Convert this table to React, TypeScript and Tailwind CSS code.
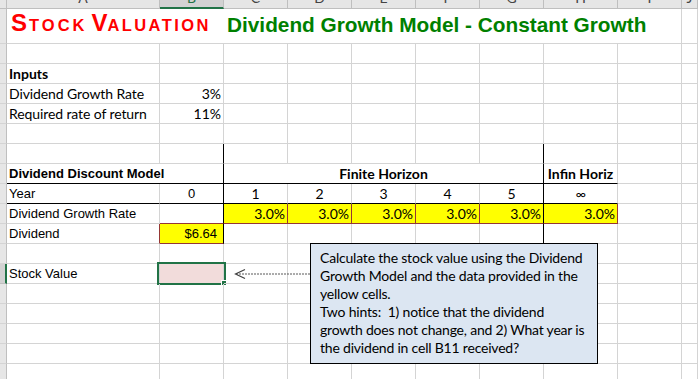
import React from "react";

const CAL = "font-['Lato',sans-serif] text-[14px]";
const ARI = "font-['Liberation_Sans',Arial,sans-serif] text-[13px]";
const G = "border-r-[#d4d4d4]";
const GB = "border-b-[#d4d4d4]";
const BLK = "border-r-black";
const BLKB = "border-b-black";
const MR = "border-r-[#953735]";
const MB = "border-b-[#953735]";

type CP = { className?: string; r?: string; b?: string; children?: React.ReactNode };

function C({ className = "", r = G, b = GB, children }: CP) {
  return (
    <div className={`relative flex items-end whitespace-nowrap border-r border-b ${r} ${b} ${className}`}>
      {children}
    </div>
  );
}

function RH({ active = false }: { active?: boolean }) {
  return active ? (
    <div className="border-b border-b-[#bfbfbf] border-r-2 border-r-[#217346] bg-[#d2d2d2]" />
  ) : (
    <div className="border-b border-r border-b-[#d4d4d4] border-r-[#bfbfbf] bg-[#e6e6e6]" />
  );
}

function Blank({ n }: { n: number }) {
  return (
    <>
      {Array.from({ length: n }).map((_, i) => (
        <C key={i} />
      ))}
    </>
  );
}

function HeadCell({ l, active = false }: { l: string; active?: boolean }) {
  return active ? (
    <div className="flex items-end justify-center overflow-hidden border-r border-r-[#bfbfbf] border-b-2 border-b-[#217346] bg-[#d2d2d2]">
      <span className={`${CAL} leading-[14px] mb-[2px] text-[#217346]`}>{l}</span>
    </div>
  ) : (
    <div className="flex items-end justify-center overflow-hidden border-r border-b border-r-[#bfbfbf] border-b-[#bfbfbf] bg-[#e6e6e6]">
      <span className={`${CAL} leading-[14px] mb-[3px] text-[#444444]`}>{l}</span>
    </div>
  );
}

export default function App() {
  const num = `${CAL} leading-[16px] pb-[1px] text-black`;
  const ar = `${ARI} leading-[15px] pb-[2px] text-black`;
  return (
    <div className="relative w-[698px] h-[379px] overflow-hidden bg-white">
      <div className="grid grid-cols-[7px_153px_64px_64px_64px_64px_64px_64px_74px_64px_1fr] grid-rows-[9px_35px_repeat(17,20px)]">
        {/* header row */}
        <div className="border-r border-b border-[#bfbfbf] bg-[#e6e6e6]" />
        <HeadCell l="A" />
        <HeadCell l="B" active />
        <HeadCell l="C" />
        <HeadCell l="D" />
        <HeadCell l="E" />
        <HeadCell l="F" />
        <HeadCell l="G" />
        <HeadCell l="H" />
        <HeadCell l="I" />
        <HeadCell l="J" />

        {/* row 1 */}
        <RH />
        <C className="col-span-9 items-end pb-[5px]">
          <div className="flex items-baseline w-[216px] pl-[4px] font-['Liberation_Sans',Arial,sans-serif] font-bold text-[#ff0000]">
            <span className="text-[24px] leading-[26px]">S</span>
            <span className="text-[16.5px] tracking-[3px] ml-[2px]">TOCK</span>
            <span className="text-[24px] leading-[26px] ml-[4px]">V</span>
            <span className="text-[16.5px] tracking-[2.4px]">ALUATION</span>
          </div>
          <div className="pl-[4px] font-['Liberation_Sans',Arial,sans-serif] font-bold text-[20.8px] leading-[24px] mb-[1px] text-[#008000]">
            Dividend Growth Model - Constant Growth
          </div>
        </C>
        <C />

        {/* row 2 */}
        <RH />
        <Blank n={10} />

        {/* row 3 */}
        <RH />
        <C className={`${num} font-bold pl-[2px]`}>Inputs</C>
        <Blank n={9} />

        {/* row 4 */}
        <RH />
        <C className={`${num} pl-[2px] tracking-[-0.1px]`}>Dividend Growth Rate</C>
        <C className={`${num} justify-end pr-[2px]`}>3%</C>
        <Blank n={8} />

        {/* row 5 */}
        <RH />
        <C className={`${num} pl-[2px] tracking-[-0.1px]`}>Required rate of return</C>
        <C className={`${num} justify-end pr-[2px]`}>11%</C>
        <Blank n={8} />

        {/* row 6 */}
        <RH />
        <Blank n={10} />

        {/* row 7 */}
        <RH />
        <C />
        <C r={BLK} />
        <C />
        <C />
        <C />
        <C />
        <C r={BLK} />
        <C />
        <C />
        <C />

        {/* row 8 */}
        <RH />
        <C className={`col-span-2 ${ar} font-bold pl-[2px]`} r={BLK} b={BLKB}>
          Dividend Discount Model
        </C>
        <C className={`col-span-5 ${num} font-bold justify-center`} r={BLK} b={BLKB}>
          Finite Horizon
        </C>
        <C className={`${num} font-bold justify-center`} b={BLKB}>
          Infin Horiz
        </C>
        <C />
        <C />

        {/* row 9 */}
        <RH />
        <C className={`${ar} pl-[2px]`} b={BLKB}>Year</C>
        <C className={`${ar} justify-center`} r={BLK} b={BLKB}>0</C>
        <C className={`${num} justify-center`} b={BLKB}>1</C>
        <C className={`${num} justify-center`} b={BLKB}>2</C>
        <C className={`${num} justify-center`} b={BLKB}>3</C>
        <C className={`${num} justify-center`} b={BLKB}>4</C>
        <C className={`${num} justify-center`} r={BLK} b={BLKB}>5</C>
        <C className={`${num} justify-center`} b={BLKB}>
          <span className="text-[13px] scale-x-110 inline-block">∞</span>
        </C>
        <C />
        <C />

        {/* row 10 */}
        <RH />
        <C className={`${ar} pl-[2px]`}>Dividend Growth Rate</C>
        <C r={BLK} b={MB} />
        <C className={`${num} justify-end pr-[2px] bg-[#ffff00]`} r={MR} b={MB}>3.0%</C>
        <C className={`${num} justify-end pr-[2px] bg-[#ffff00]`} r={MR} b={MB}>3.0%</C>
        <C className={`${num} justify-end pr-[2px] bg-[#ffff00]`} r={MR} b={MB}>3.0%</C>
        <C className={`${num} justify-end pr-[2px] bg-[#ffff00]`} r={MR} b={MB}>3.0%</C>
        <C className={`${num} justify-end pr-[2px] bg-[#ffff00]`} r={BLK} b={MB}>3.0%</C>
        <C className={`${num} justify-end pr-[2px] bg-[#ffff00]`} r={MR} b={MB}>3.0%</C>
        <C />
        <C />

        {/* row 11 */}
        <RH />
        <C className={`${ar} pl-[2px]`} r={MR}>Dividend</C>
        <C className={`${ar} justify-end pr-[6px] bg-[#ffff00]`} r={BLK} b={MB}>$6.64</C>
        <C />
        <C />
        <C />
        <C />
        <C r={BLK} />
        <C />
        <C />
        <C />

        {/* row 12 */}
        <RH />
        <Blank n={10} />

        {/* row 13 */}
        <RH active />
        <C className={`${ar} pl-[2px]`}>Stock Value</C>
        <C className="bg-[#f2dcdb]">
          <div className="absolute -left-[3px] -top-[2px] -right-[3px] -bottom-[2px] border-2 border-[#217346]">
            <div className="absolute -right-[3px] -bottom-[3px] w-[6px] h-[6px] bg-[#217346] border border-white" />
          </div>
        </C>
        <Blank n={8} />

        {/* rows 14-18 */}
        <RH />
        <Blank n={10} />
        <RH />
        <Blank n={10} />
        <RH />
        <Blank n={10} />
        <RH />
        <Blank n={10} />
        <RH />
        <Blank n={10} />
      </div>

      {/* dashed arrow */}
      <svg className="absolute left-[233px] top-[266px]" width="80" height="16" viewBox="0 0 80 16">
        <line x1="3" y1="8" x2="78" y2="8" stroke="#595959" strokeWidth="1" strokeDasharray="2 1" />
        <polyline points="12,3.5 2.5,8 12,12.5" fill="none" stroke="#404040" strokeWidth="1.2" />
      </svg>

      {/* text box */}
      <div className="absolute left-[310px] top-[243px] w-[288px] h-[121px] bg-[#dce6f2] border border-black pl-[9px] pt-[5px]">
        <div className={`${CAL} leading-[18px] tracking-[-0.2px] text-black whitespace-pre`}>
          {"Calculate the stock value using the Dividend\nGrowth Model and the data provided in the\nyellow cells.\nTwo hints:  1) notice that the dividend\ngrowth does not change, and 2) What year is\nthe dividend in cell B11 received?"}
        </div>
      </div>
    </div>
  );
}
